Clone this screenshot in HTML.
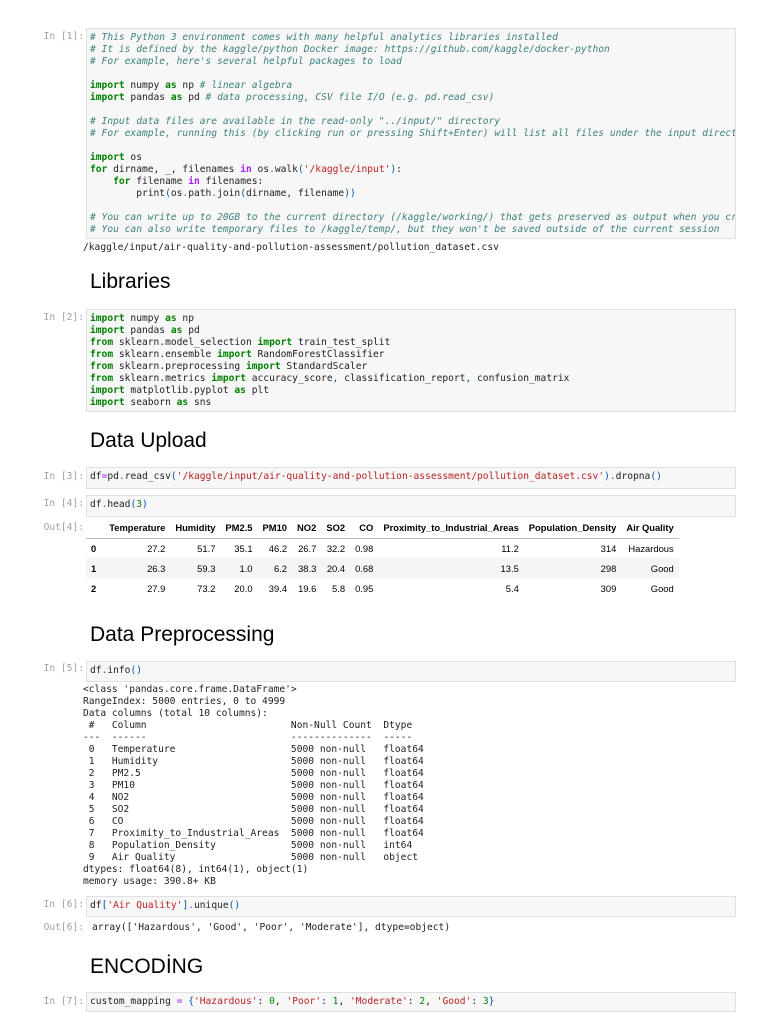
<!DOCTYPE html>
<html><head><meta charset="utf-8"><style>
*{margin:0;padding:0;box-sizing:border-box}
body{width:768px;height:1024px;background:#fff;position:relative;overflow:hidden;font-family:"DejaVu Sans Mono","Liberation Mono",monospace;font-size:9.6px;color:#222}
.p{position:absolute;right:684px;width:80px;text-align:right;color:#a0a0a0;font-size:9.6px;line-height:12px;white-space:pre}
.box{position:absolute;left:86px;width:650px;background:#f7f7f7;border:1px solid #e0e0e0;padding:3px 3px;overflow:hidden}
pre{font-family:inherit;font-size:9.6px;line-height:12px;white-space:pre}
.c{color:#408080;font-style:italic}.k{color:#008000;font-weight:bold}.kp{color:#aa22ff;font-weight:bold}
.s{color:#ba2121}.o{color:#aa22ff}.b{color:#0055aa}.n{color:#008800}
.out{position:absolute;left:83px}
h2{position:absolute;left:90px;font-family:"Liberation Sans",sans-serif;font-weight:normal;font-size:21px;color:#000}
table{position:absolute;left:86px;top:518px;border-collapse:collapse;font-family:"Liberation Sans",sans-serif;font-size:9.4px;color:#000}
th,td{height:20px;padding:0 5px;text-align:right;white-space:nowrap}
th{font-weight:bold}
thead tr{border-bottom:1px solid #bbb}
tbody tr:nth-child(2){background:#f5f5f5}
td.i{font-weight:bold;text-align:left;padding-left:5px;padding-right:8px}
</style></head><body>

<div class="p" style="top:31px">In [1]:</div>
<div class="box" style="top:28px;height:211px"><pre><span class="c"># This Python 3 environment comes with many helpful analytics libraries installed</span>
<span class="c"># It is defined by the kaggle/python Docker image: https://github.com/kaggle/docker-python</span>
<span class="c"># For example, here's several helpful packages to load</span>

<span class="k">import</span> numpy <span class="k">as</span> np <span class="c"># linear algebra</span>
<span class="k">import</span> pandas <span class="k">as</span> pd <span class="c"># data processing, CSV file I/O (e.g. pd.read_csv)</span>

<span class="c"># Input data files are available in the read-only "../input/" directory</span>
<span class="c"># For example, running this (by clicking run or pressing Shift+Enter) will list all files under the input directory</span>

<span class="k">import</span> os
<span class="k">for</span> dirname, _, filenames <span class="kp">in</span> os<span class="o">.</span>walk<span class="b">(</span><span class="s">'/kaggle/input'</span><span class="b">)</span>:
    <span class="k">for</span> filename <span class="kp">in</span> filenames:
        print<span class="b">(</span>os<span class="o">.</span>path<span class="o">.</span>join<span class="b">(</span>dirname, filename<span class="b">))</span>

<span class="c"># You can write up to 20GB to the current directory (/kaggle/working/) that gets preserved as output when you create a version</span>
<span class="c"># You can also write temporary files to /kaggle/temp/, but they won't be saved outside of the current session</span></pre></div>
<pre class="out" style="top:242px">/kaggle/input/air-quality-and-pollution-assessment/pollution_dataset.csv</pre>

<h2 style="top:270px">Libraries</h2>

<div class="p" style="top:312px">In [2]:</div>
<div class="box" style="top:309px;height:103px"><pre><span class="k">import</span> numpy <span class="k">as</span> np
<span class="k">import</span> pandas <span class="k">as</span> pd
<span class="k">from</span> sklearn.model_selection <span class="k">import</span> train_test_split
<span class="k">from</span> sklearn.ensemble <span class="k">import</span> RandomForestClassifier
<span class="k">from</span> sklearn.preprocessing <span class="k">import</span> StandardScaler
<span class="k">from</span> sklearn.metrics <span class="k">import</span> accuracy_score<span class="b">,</span> classification_report<span class="b">,</span> confusion_matrix
<span class="k">import</span> matplotlib.pyplot <span class="k">as</span> plt
<span class="k">import</span> seaborn <span class="k">as</span> sns</pre></div>

<h2 style="top:429px">Data Upload</h2>

<div class="p" style="top:471px">In [3]:</div>
<div class="box" style="top:467px;height:22px"><pre>df<span class="o">=</span>pd<span class="o">.</span>read_csv<span class="b">(</span><span class="s">'/kaggle/input/air-quality-and-pollution-assessment/pollution_dataset.csv'</span><span class="b">)</span><span class="o">.</span>dropna<span class="b">()</span></pre></div>

<div class="p" style="top:498px">In [4]:</div>
<div class="box" style="top:495px;height:22px"><pre>df<span class="o">.</span>head<span class="b">(</span><span class="n">3</span><span class="b">)</span></pre></div>

<div class="p" style="top:522px">Out[4]:</div>
<table>
<thead><tr><th></th><th>Temperature</th><th>Humidity</th><th>PM2.5</th><th>PM10</th><th>NO2</th><th>SO2</th><th>CO</th><th>Proximity_to_Industrial_Areas</th><th>Population_Density</th><th>Air Quality</th></tr></thead>
<tbody>
<tr><td class="i">0</td><td>27.2</td><td>51.7</td><td>35.1</td><td>46.2</td><td>26.7</td><td>32.2</td><td>0.98</td><td>11.2</td><td>314</td><td>Hazardous</td></tr>
<tr><td class="i">1</td><td>26.3</td><td>59.3</td><td>1.0</td><td>6.2</td><td>38.3</td><td>20.4</td><td>0.68</td><td>13.5</td><td>298</td><td>Good</td></tr>
<tr><td class="i">2</td><td>27.9</td><td>73.2</td><td>20.0</td><td>39.4</td><td>19.6</td><td>5.8</td><td>0.95</td><td>5.4</td><td>309</td><td>Good</td></tr>
</tbody></table>

<h2 style="top:623px">Data Preprocessing</h2>

<div class="p" style="top:663px">In [5]:</div>
<div class="box" style="top:661px;height:21px"><pre>df<span class="o">.</span>info<span class="b">()</span></pre></div>
<pre class="out" style="top:684px">&lt;class 'pandas.core.frame.DataFrame'&gt;
RangeIndex: 5000 entries, 0 to 4999
Data columns (total 10 columns):
 #   Column                         Non-Null Count  Dtype  
---  ------                         --------------  -----  
 0   Temperature                    5000 non-null   float64
 1   Humidity                       5000 non-null   float64
 2   PM2.5                          5000 non-null   float64
 3   PM10                           5000 non-null   float64
 4   NO2                            5000 non-null   float64
 5   SO2                            5000 non-null   float64
 6   CO                             5000 non-null   float64
 7   Proximity_to_Industrial_Areas  5000 non-null   float64
 8   Population_Density             5000 non-null   int64  
 9   Air Quality                    5000 non-null   object 
dtypes: float64(8), int64(1), object(1)
memory usage: 390.8+ KB</pre>

<div class="p" style="top:899px">In [6]:</div>
<div class="box" style="top:896px;height:21px"><pre>df<span class="b">[</span><span class="s">'Air Quality'</span><span class="b">]</span><span class="o">.</span>unique<span class="b">()</span></pre></div>
<div class="p" style="top:922px">Out[6]:</div>
<pre class="out" style="top:922px;left:92px">array(['Hazardous', 'Good', 'Poor', 'Moderate'], dtype=object)</pre>

<h2 style="top:955px">ENCODİNG</h2>

<div class="p" style="top:996px">In [7]:</div>
<div class="box" style="top:992px;height:20px"><pre>custom_mapping <span class="o">=</span> <span class="b">{</span><span class="s">'Hazardous'</span>: <span class="n">0</span>, <span class="s">'Poor'</span>: <span class="n">1</span>, <span class="s">'Moderate'</span>: <span class="n">2</span>, <span class="s">'Good'</span>: <span class="n">3</span><span class="b">}</span></pre></div>

</body></html>
